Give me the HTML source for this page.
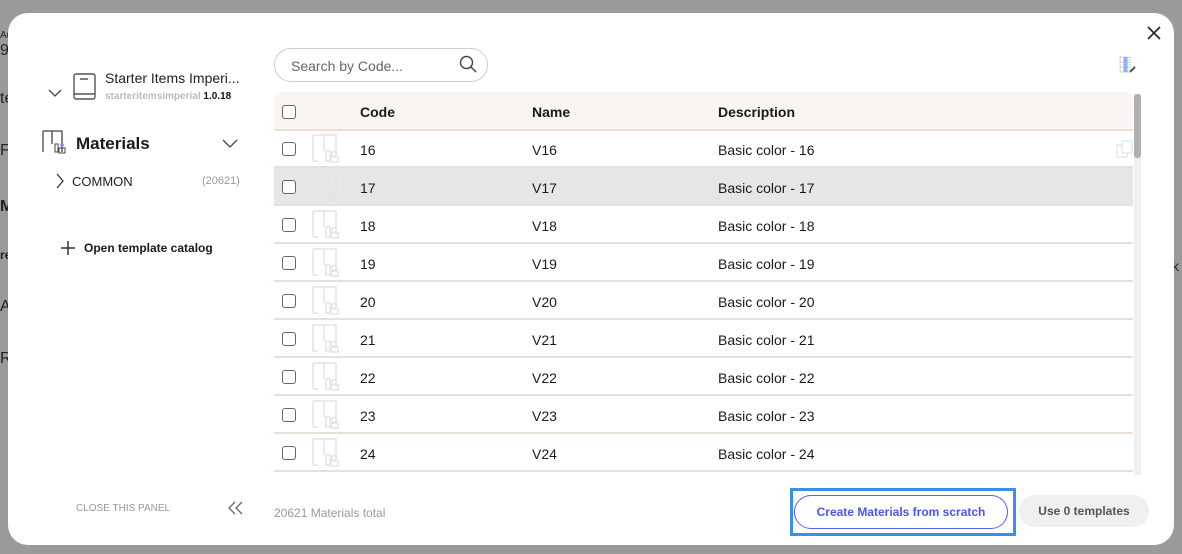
<!DOCTYPE html>
<html><head><style>
*{box-sizing:border-box;margin:0;padding:0}
body{width:1182px;height:554px;background:#9a9a9a;font-family:"Liberation Sans",sans-serif;position:relative;overflow:hidden;color:#1a1a1a}
.bg{position:absolute;color:#222;font-size:16px}
.modal{position:absolute;left:8px;top:13px;width:1166px;height:532px;background:#fff;border-radius:20px}
.abs{position:absolute}
.cb{position:absolute;width:14px;height:14px;border:1.3px solid #666;border-radius:3px;background:#fff}
.row{position:absolute;left:266px;width:859px;height:38px;border-bottom:2px solid #ecdfd7;font-size:14px}
.row span{position:absolute;top:12px}
.thumb{position:absolute;left:38px;top:4px;width:27px;height:30px}
</style></head><body>
<div class="bg" style="left:0;top:30px;font-size:10px">Au</div>
<div class="bg" style="left:0;top:42px">9.</div>
<div class="bg" style="left:0;top:90px">te</div>
<div class="bg" style="left:0;top:142px">Fe</div>
<div class="bg" style="left:0;top:198px;font-weight:bold">M</div>
<div class="bg" style="left:0;top:248px;font-size:12px;font-weight:bold">re</div>
<div class="bg" style="left:0;top:298px">A</div>
<div class="bg" style="left:0;top:350px">R</div>
<div class="bg" style="left:1172px;top:258px;font-size:14px">k</div>
<div class="modal">
 <svg class="abs" style="left:1138px;top:12px" width="16" height="16"><path d="M2 2L14 14M14 2L2 14" stroke="#222" stroke-width="1.6"/></svg>
 <svg class="abs" style="left:40px;top:75px" width="14" height="10"><path d="M1 2L7 8L13 2" stroke="#444" fill="none" stroke-width="1.3"/></svg>
 <svg class="abs" style="left:65px;top:60px" width="24" height="28"><rect x="1" y="1" width="21" height="25" rx="2" fill="none" stroke="#555" stroke-width="1.4"/><path d="M1 21H22M7 6H15" stroke="#555" stroke-width="1.4"/></svg>
 <div class="abs" style="left:97px;top:57px;font-size:14px;color:#222">Starter Items Imperi...</div>
 <div class="abs" style="left:97px;top:78px;font-size:10px;font-weight:bold;color:#bbb">starteritemsimperial <span style="color:#111">1.0.18</span></div>
 <svg class="abs" style="left:34px;top:117px" width="24" height="26"><path d="M1 1H20V22M1 1V22M10 1V14" stroke="#444" fill="none" stroke-width="1.3"/><rect x="13" y="14" width="3" height="8" fill="none" stroke="#444"/><circle cx="20" cy="15" r="2" fill="#a58be0"/><rect x="17" y="18" width="6" height="5" fill="none" stroke="#444"/></svg>
 <div class="abs" style="left:68px;top:121px;font-size:17px;font-weight:bold">Materials</div>
 <svg class="abs" style="left:214px;top:126px" width="16" height="10"><path d="M1 1L8 8L15 1" stroke="#444" fill="none" stroke-width="1.3"/></svg>
 <svg class="abs" style="left:48px;top:160px" width="8" height="16"><path d="M1 1L7 8L1 15" stroke="#333" fill="none" stroke-width="1.3"/></svg>
 <div class="abs" style="left:64px;top:161px;font-size:13px;color:#222">COMMON</div>
 <div class="abs" style="left:194px;top:162px;font-size:11px;color:#999">(20621)</div>
 <svg class="abs" style="left:53px;top:228px" width="14" height="14"><path d="M7 0V14M0 7H14" stroke="#333" stroke-width="1.5"/></svg>
 <div class="abs" style="left:76px;top:228px;font-size:12px;font-weight:bold">Open template catalog</div>
 <div class="abs" style="left:68px;top:490px;font-size:10px;color:#999">CLOSE THIS PANEL</div>
 <svg class="abs" style="left:220px;top:488px" width="16" height="14"><path d="M7 1L1 7L7 13M14 1L8 7L14 13" stroke="#666" fill="none" stroke-width="1.3"/></svg>

 <div class="abs" style="left:266px;top:35px;width:214px;height:34px;border:1px solid #ccc;border-radius:17px"></div>
 <div class="abs" style="left:283px;top:45px;font-size:14px;color:#666">Search by Code...</div>
 <svg class="abs" style="left:451px;top:42px" width="18" height="18"><circle cx="7.5" cy="7.5" r="6" fill="none" stroke="#444" stroke-width="1.4"/><path d="M12 12L17 17" stroke="#444" stroke-width="1.5"/></svg>
 <svg class="abs" style="left:1111px;top:43px" width="18" height="18"><path d="M1 1V16M5 1V16M11 1V16M1 1H11M1 6H11M1 11H11M1 16H11" stroke="#999" stroke-dasharray="1 1.5" fill="none"/><rect x="4.5" y="1" width="4" height="15" fill="#8ab4f8"/><path d="M11 16L16 11" stroke="#555" stroke-width="2"/></svg>

 <div class="abs" style="left:266px;top:79px;width:859px;height:39px;background:#f8f5f2;border-radius:8px 8px 0 0;border-bottom:2px solid #ecdfd7"></div>
 <div class="cb" style="left:274px;top:92px"></div>
 <div class="abs" style="left:352px;top:91px;font-size:14px;font-weight:bold">Code</div>
 <div class="abs" style="left:524px;top:91px;font-size:14px;font-weight:bold">Name</div>
 <div class="abs" style="left:710px;top:91px;font-size:14px;font-weight:bold">Description</div>
 <div class="abs" style="left:1126px;top:81px;width:7px;height:381px;background:#f0f0f0"></div>
 <div class="abs" style="left:1126px;top:81px;width:7px;height:64px;background:#b0b0b0;border-radius:3px"></div>
 <svg class="abs" style="left:1108px;top:127px" width="18" height="18"><rect x="1" y="5" width="10" height="12" fill="none" stroke="#ddd"/><rect x="6" y="1" width="10" height="12" fill="#fff" stroke="#ddd"/></svg>
 <div id="rows"></div>
 <div class="abs" style="left:266px;top:493px;font-size:12px;color:#999">20621 Materials total</div>
 <div class="abs" style="left:782px;top:475px;width:226px;height:48px;border:3px solid #3b8fe8"></div>
 <div class="abs" style="left:786px;top:482px;width:214px;height:34px;border:1px solid #5560f0;border-radius:17px;color:#4a55e8;font-size:12px;font-weight:bold;text-align:center;line-height:32px">Create Materials from scratch</div>
 <div class="abs" style="left:1011px;top:482px;width:130px;height:32px;background:#f0f0f0;border-radius:16px;color:#555;font-size:12px;font-weight:bold;text-align:center;line-height:32px">Use 0 templates</div>
</div>
<script>
var h='';for(var i=0;i<9;i++){var n=16+i;var t=117+i*38;
h+='<div class="row" style="top:'+t+'px;'+(i==1?'background:#e6e6e6':'')+'"><div class="cb" style="left:8px;top:12px"></div><svg class="thumb" viewBox="0 0 27 30"><path d="M1 1H24V22M1 1V27M12 1V17M1 27H6" stroke="#e4e4e4" fill="none" stroke-width="1.5"/><rect x="14" y="17" width="4" height="10" fill="none" stroke="#e4e4e4" stroke-width="1.5"/><circle cx="22" cy="20" r="2.5" fill="none" stroke="#e4e4e4" stroke-width="1.5"/><rect x="19" y="23" width="7" height="5" fill="none" stroke="#e4e4e4" stroke-width="1.5"/></svg><span style="left:86px">'+n+'</span><span style="left:258px">V'+n+'</span><span style="left:444px">Basic color - '+n+'</span></div>';}
document.getElementById('rows').innerHTML=h;
</script>
</body></html>
